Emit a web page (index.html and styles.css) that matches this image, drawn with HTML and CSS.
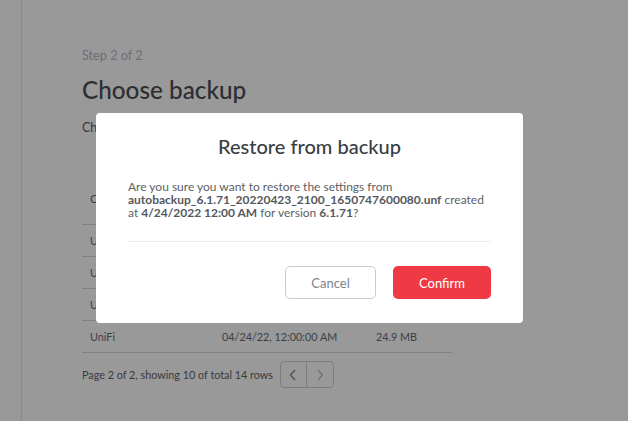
FILE: index.html
```html
<!DOCTYPE html>
<html>
<head>
<meta charset="utf-8">
<link rel="stylesheet" href="styles.css">
</head>
<body>
<div class="app">
  <aside class="sidebar"></aside>
  <main class="main">
    <div class="step">Step 2 of 2</div>
    <h1 class="title">Choose backup</h1>
    <p class="desc">Choose a backup file to restore the console settings from.</p>
    <div class="table">
      <div class="row head"><span class="c1">Console</span><span class="c2"></span><span class="c3"></span></div>
      <div class="row"><span class="c1">UniFi</span><span class="c2"></span><span class="c3"></span></div>
      <div class="row"><span class="c1">UniFi</span><span class="c2"></span><span class="c3"></span></div>
      <div class="row"><span class="c1">UniFi</span><span class="c2"></span><span class="c3"></span></div>
      <div class="row"><span class="c1">UniFi</span><span class="c2">04/24/22, 12:00:00 AM</span><span class="c3">24.9 MB</span></div>
    </div>
    <div class="pager">
      <span class="pager-text">Page 2 of 2, showing 10 of total 14 rows</span>
      <div class="pager-btns">
        <button class="pbtn prev"><svg width="10" height="12" viewBox="0 0 10 12"><path d="M7 1 L2.5 6 L7 11" fill="none" stroke="#7a7f88" stroke-width="1.2"/></svg></button>
        <button class="pbtn next"><svg width="10" height="12" viewBox="0 0 10 12"><path d="M3 1 L7.5 6 L3 11" fill="none" stroke="#b9bdc4" stroke-width="1.2"/></svg></button>
      </div>
    </div>
  </main>
</div>
<div class="overlay">
  <div class="modal">
    <h2 class="modal-title">Restore from backup</h2>
    <p class="modal-text">Are you sure you want to restore the settings from <b>autobackup_6.1.71_20220423_2100_1650747600080.unf</b> created at <b>4/24/2022 12:00 AM</b> for version <b>6.1.71</b>?</p>
    <div class="modal-sep"></div>
    <div class="modal-actions">
      <button class="btn cancel">Cancel</button>
      <button class="btn confirm">Confirm</button>
    </div>
  </div>
</div>
</body>
</html>
```
FILE: styles.css
```css
* { box-sizing: border-box; }
html, body { margin: 0; height: 100%; }
body {
  font-family: Lato, "Open Sans", sans-serif;
  background: #fff;
  color: #50545c;
  overflow: hidden;
}
.app { display: flex; height: 421px; }
.sidebar {
  width: 22px;
  border-right: 1px solid #e4e4e4;
  flex: none;
}
.main {
  padding: 47px 0 0 60px;
  flex: 1;
}
.step {
  font-size: 12.7px;
  line-height: 16px;
  color: #b3b9c9;
}
.title {
  margin: 12px 0 0;
  font-size: 24.3px;
  line-height: 30px;
  font-weight: 500;
  color: #4a4e57;
}
.desc {
  margin: 15px 0 0;
  font-size: 12.5px;
  line-height: 16px;
  color: #5a5e66;
}
.table {
  width: 370px;
  margin-top: 37px;
  font-size: 10.8px;
  color: #676b73;
}
.row {
  display: flex;
  align-items: center;
  height: 32px;
  border-bottom: 1px solid #d6d6d6;
}
.row.head { height: 52px; font-size: 12px; }
.c1 { width: 140px; padding-left: 8px; }
.c2 { width: 154px; }
.c3 { flex: 1; }
.pager {
  display: flex;
  align-items: center;
  gap: 7px;
  margin-top: 8px;
}
.pager-text { font-size: 10.8px; color: #5f636b; }
.pager-btns {
  display: flex;
  height: 27px;
  border: 1px solid #d0d2d6;
  border-radius: 4px;
}
.pbtn {
  width: 26px;
  height: 25px;
  padding: 0;
  border: 0;
  background: transparent;
  display: flex;
  align-items: center;
  justify-content: center;
}
.pbtn.prev { border-right: 1px solid #d0d2d6; }
.overlay {
  position: fixed;
  inset: 0;
  background: rgba(0, 0, 0, 0.4);
}
.modal {
  position: absolute;
  left: 96px;
  top: 113px;
  width: 427px;
  background: #fff;
  border-radius: 4px;
  padding: 21px 32px 24px;
}
.modal-title {
  margin: 0;
  text-align: center;
  font-size: 20px;
  line-height: 24px;
  font-weight: 500;
  color: #3a3d42;
}
.modal-text {
  margin: 22px 0 0;
  font-size: 12px;
  line-height: 13px;
  color: #5b5f66;
}
.modal-text b { font-weight: 700; color: #55585e; }
.modal-sep {
  height: 1px;
  background: #ececec;
  margin-top: 22px;
}
.modal-actions {
  display: flex;
  justify-content: flex-end;
  gap: 17px;
  margin-top: 24px;
}
.btn {
  height: 33px;
  border-radius: 5px;
  font-family: Lato, sans-serif;
  font-size: 13px;
}
.cancel {
  width: 91px;
  background: #fff;
  border: 1px solid #c8cacd;
  color: #7d838c;
}
.confirm {
  width: 98px;
  background: #ef3a45;
  border: 0;
  color: #fff;
}
```
